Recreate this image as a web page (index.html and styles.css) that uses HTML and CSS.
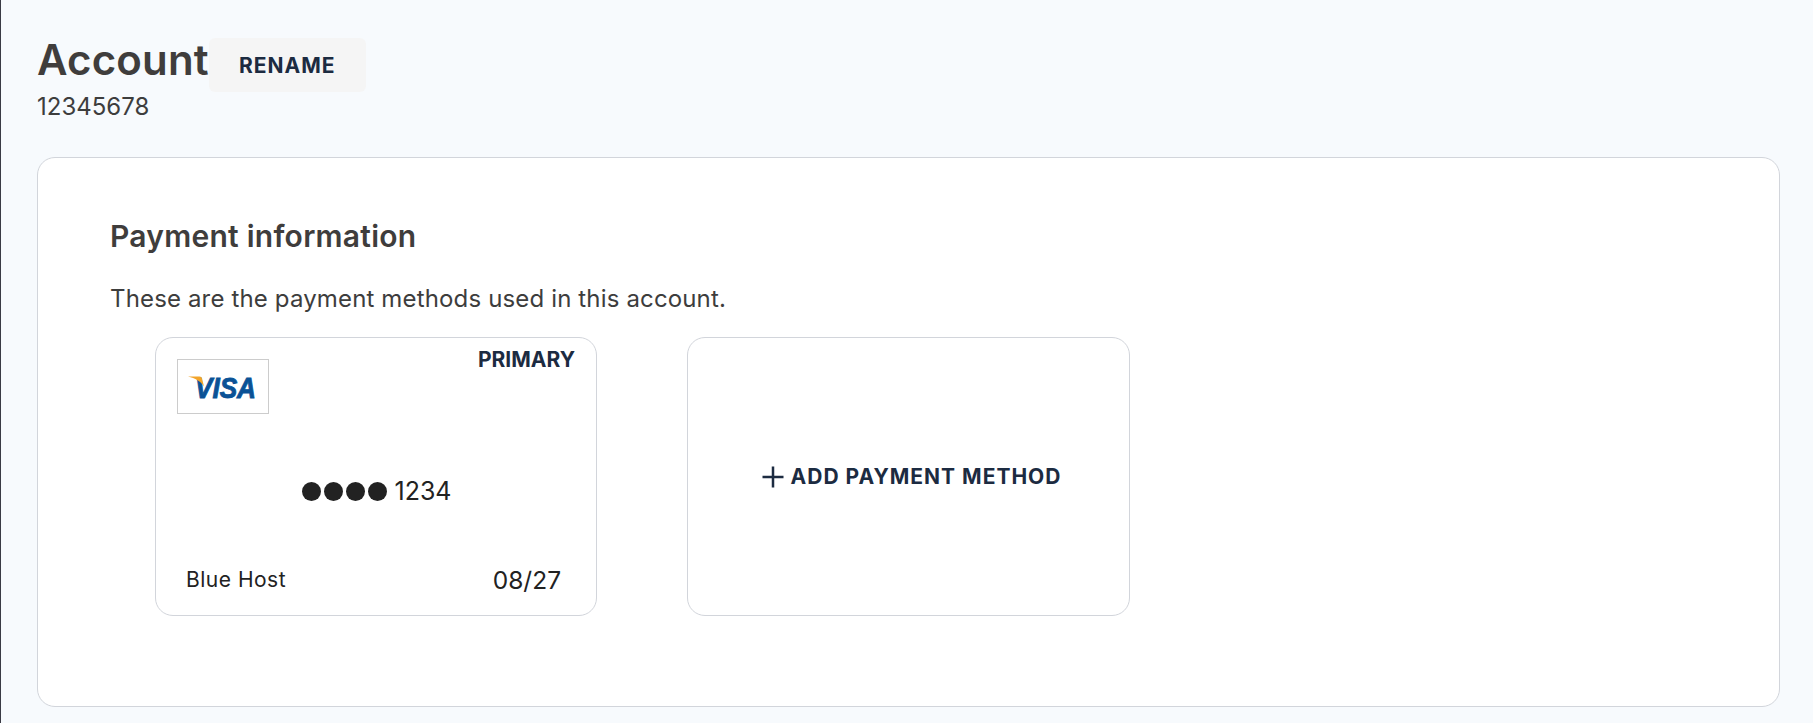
FILE: index.html
```html
<!DOCTYPE html>
<html lang="en">
<head>
<meta charset="utf-8">
<title>Account</title>
<link rel="stylesheet" href="styles.css">
</head>
<body>
<main class="page">
  <header class="head">
    <div class="title-row">
      <h1 class="title">Account</h1>
      <button class="rename" type="button">RENAME</button>
    </div>
    <div class="acct-no">12345678</div>
  </header>
  <section class="panel">
    <h2 class="panel-title">Payment information</h2>
    <p class="panel-desc">These are the payment methods used in this account.</p>
    <div class="cards">
      <article class="card pay-card">
        <div class="card-top">
          <div class="visa">
            <svg class="visa-logo" width="68" height="24" viewBox="0 0 68 24" aria-label="VISA">
              <text class="visa-text" x="6" y="22.5" textLength="61" lengthAdjust="spacingAndGlyphs">VISA</text>
              <path class="visa-wing" d="M-1 1.5H10.5C12 1.5 12.6 2.2 13 3.6L15 11.5C12 6.5 6 3 -1 1.5Z"/>
            </svg>
          </div>
          <div class="primary">PRIMARY</div>
        </div>
        <div class="number"><span class="dots"><i></i><i></i><i></i><i></i></span><span>1234</span></div>
        <div class="card-bottom">
          <span class="holder">Blue Host</span>
          <span class="expiry">08/27</span>
        </div>
      </article>
      <button class="card add-card" type="button">
        <svg class="plus" width="22" height="22" viewBox="0 0 22 22"><path d="M11 0.5V21.5M0.5 11H21.5"/></svg>
        <span>ADD PAYMENT METHOD</span>
      </button>
    </div>
  </section>
</main>
</body>
</html>
```
FILE: styles.css
```css
* { box-sizing: border-box; }
html, body { height: 100%; }
body {
  margin: 0;
  background: #f7fafd;
  font-family: Inter, "Liberation Sans", sans-serif;
  color: #3d3d3d;
}
.page {
  min-height: 100%;
  padding: 38px 33px 0 36px;
  border-left: 1px solid #3a3a44;
}
.title-row { display: flex; align-items: flex-start; height: 54px; }
.title { margin: 0; font-size: 42px; line-height: 44px; font-weight: 600; letter-spacing: .15px; color: #3f3d3c; }
.rename {
  width: 157px;
  height: 54px;
  border: 0;
  border-radius: 6px;
  background: #f5f5f5;
  font: 700 21px Inter, sans-serif;
  letter-spacing: 1px;
  color: #1c2b41;
}
.acct-no { font-size: 24px; line-height: 28px; margin-top: 1px; }
.panel {
  margin-top: 36px;
  height: 550px;
  padding: 59px 72px;
  background: #fff;
  border: 1px solid #d2d5db;
  border-radius: 18px;
}
.panel-title { margin: 0; font-size: 30px; line-height: 38px; font-weight: 600; letter-spacing: .25px; color: #3f3d3c; }
.panel-desc { margin: 29px 0 0; font-size: 24px; line-height: 30px; letter-spacing: .15px; }
.cards { display: flex; gap: 90px; margin: 23px 0 0 45px; }
.card {
  width: 442px;
  height: 279px;
  border: 1px solid #d2d5db;
  border-radius: 18px;
  background: #fff;
}
.pay-card { display: flex; flex-direction: column; padding: 21px; color: #222; }
.card-top { display: flex; justify-content: space-between; align-items: flex-start; }
.visa {
  width: 92px;
  height: 55px;
  border: 1px solid #ccc;
  display: flex;
  align-items: center;
  justify-content: center;
}
.visa-logo { overflow: visible; }
.visa-wing { fill: #f2a42a; }
.visa-text { font: italic 700 29px "Liberation Sans", sans-serif; fill: #0a5296; stroke: #0a5296; stroke-width: .9px; }
.primary { font-size: 21px; line-height: 24px; font-weight: 700; color: #1c2b41; margin-top: -11px; }
.number { display: flex; align-items: center; justify-content: center; gap: 7px; margin-top: 62px; padding-left: 2px; font-size: 25px; line-height: 30px; }
.dots { display: flex; gap: 3px; }
.dots i { width: 19px; height: 19px; border-radius: 50%; background: #222; }
.card-bottom { display: flex; justify-content: space-between; align-items: center; margin-top: auto; padding: 0 14px 0 9px; }
.holder { font-size: 21px; line-height: 28px; letter-spacing: .5px; }
.expiry { font-size: 24.5px; line-height: 28px; }
.add-card {
  width: 443px;
  display: flex;
  align-items: center;
  justify-content: center;
  gap: 7px;
  padding: 0 0 0 6px;
  font: 700 21px Inter, sans-serif;
  letter-spacing: 1px;
  color: #1c2b41;
}
.plus path { stroke: #1c2b41; stroke-width: 2.5; fill: none; }
```
